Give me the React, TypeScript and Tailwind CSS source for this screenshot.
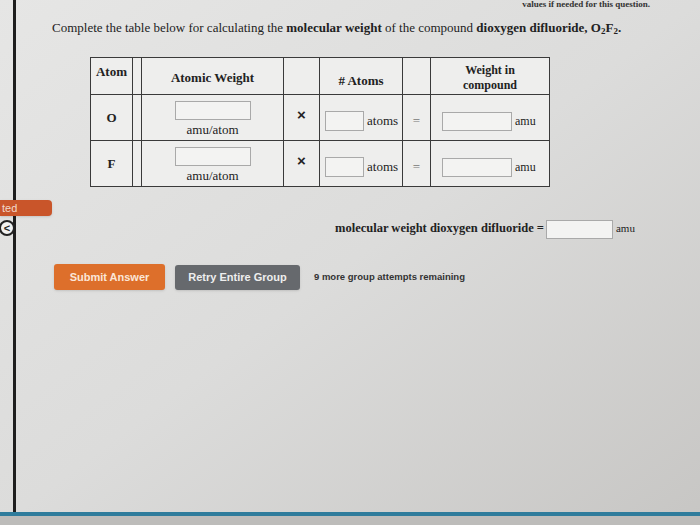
import type { ReactNode } from 'react'

const serif = { fontFamily: '"Liberation Serif", "Times New Roman", serif' }
const sans = { fontFamily: '"Liberation Sans", Arial, sans-serif' }

function Box({ w, h = 19 }: { w: number; h?: number }) {
  return (
    <span
      className="inline-block border border-[#a9a9a9] bg-[#f3f3f2] align-middle"
      style={{ width: w, height: h }}
    />
  )
}

function Cell({ children, className = '' }: { children?: ReactNode; className?: string }) {
  return (
    <td className={`border-[1.5px] border-[#3a3a3a] p-0 text-center align-middle ${className}`}>
      {children}
    </td>
  )
}

function AtomRow({ atom }: { atom: string }) {
  return (
    <tr className="h-[46px]">
      <Cell className="font-bold">{atom}</Cell>
      <Cell />
      <Cell>
        <div className="flex flex-col items-center pt-[4px]">
          <Box w={76} />
          <span className="mt-[2px] leading-[16px]">amu/atom</span>
        </div>
      </Cell>
      <Cell className="align-top">
        <div className="pt-[12px] text-[15px] font-bold leading-none" style={sans}>
          ×
        </div>
      </Cell>
      <Cell>
        <div className="flex items-center gap-[3px] pl-[5px] pt-[6px]">
          <Box w={39} h={20} />
          <span>atoms</span>
        </div>
      </Cell>
      <Cell>
        <div className="pt-[6px] text-[#777]">=</div>
      </Cell>
      <Cell>
        <div className="flex items-center gap-[3px] pl-[11px] pt-[8px]">
          <Box w={70} />
          <span className="text-[12px]">amu</span>
        </div>
      </Cell>
    </tr>
  )
}

export default function App() {
  return (
    <div className="relative h-[525px] w-[700px] overflow-hidden bg-gradient-to-br from-[#e6e6e5] via-[#dcdcdb] to-[#c7c6c4]">
      {/* side tab + collapse toggle, overlaying the rail */}
      <div
        className="absolute left-0 top-[200px] flex h-[16px] w-[52px] items-center rounded-r-[4px] bg-[#c9552a] pl-[2px] text-[11px] text-[#f3d9cc] shadow"
        style={sans}
      >
        ted
      </div>
      <div
        className="absolute left-[-1px] top-[220px] flex h-[16px] w-[16px] items-center justify-center rounded-full border-2 border-[#222] bg-[#f2f2f2] text-[11px] font-bold leading-none text-[#222]"
        style={sans}
      >
        &lt;
      </div>

      <div className="flex h-[512px]">
        <div className="ml-[13px] w-[3px] bg-[#1e1e1e]" />
        <div className="flex flex-1 flex-col text-[#222]" style={serif}>
          <div className="h-[9px] pr-[50px] text-right text-[9px] font-bold leading-[9px] text-[#333]">
            values if needed for this question.
          </div>

          <p className="ml-[36px] mt-[11px] text-[13px] leading-[16px]">
            Complete the table below for calculating the <b>molecular weight</b> of the compound{' '}
            <b>
              dioxygen difluoride, O<sub className="text-[9px]">2</sub>F<sub className="text-[9px]">2</sub>.
            </b>
          </p>

          <table className="ml-[74px] mt-[21px] w-[459px] table-fixed border-collapse bg-[#eeeeed] text-[13px] leading-[15px]">
            <colgroup>
              <col className="w-[42px]" />
              <col className="w-[9px]" />
              <col className="w-[142px]" />
              <col className="w-[36px]" />
              <col className="w-[83px]" />
              <col className="w-[28px]" />
              <col className="w-[119px]" />
            </colgroup>
            <tbody>
              <tr className="h-[37px] font-bold">
                <Cell className="align-top">
                  <div className="pt-[6px]">Atom</div>
                </Cell>
                <Cell />
                <Cell>
                  <div className="pt-[2px]">Atomic Weight</div>
                </Cell>
                <Cell />
                <Cell>
                  <div className="pt-[8px]"># Atoms</div>
                </Cell>
                <Cell />
                <Cell>
                  <div className="pt-[4px] text-[12px] leading-[15px]">
                    Weight in
                    <br />
                    compound
                  </div>
                </Cell>
              </tr>
              <AtomRow atom="O" />
              <AtomRow atom="F" />
            </tbody>
          </table>

          <div className="ml-[319px] mt-[29px] flex items-center">
            <span className="text-[12.5px] font-bold">molecular weight dioxygen difluoride =</span>
            <span className="ml-[2px]">
              <Box w={67} />
            </span>
            <span className="ml-[3px] text-[11px]">amu</span>
          </div>

          <div className="ml-[38px] mt-[24px] flex items-center" style={sans}>
            <button
              type="button"
              className="h-[26px] w-[111px] rounded-[3px] bg-[#dd6f2b] text-[11px] font-bold text-[#fbe6d8] shadow-sm"
            >
              Submit Answer
            </button>
            <button
              type="button"
              className="ml-[10px] h-[25px] w-[125px] rounded-[3px] bg-[#66696d] text-[11px] font-bold text-[#eeeeee] shadow-sm"
            >
              Retry Entire Group
            </button>
            <span className="ml-[14px] text-[9.5px] font-bold text-[#333]">
              9 more group attempts remaining
            </span>
          </div>
        </div>
      </div>

      <div className="h-[4px] bg-[#2f7c9c]" />
      <div className="h-[9px] bg-[#bdbcba]" />
    </div>
  )
}
